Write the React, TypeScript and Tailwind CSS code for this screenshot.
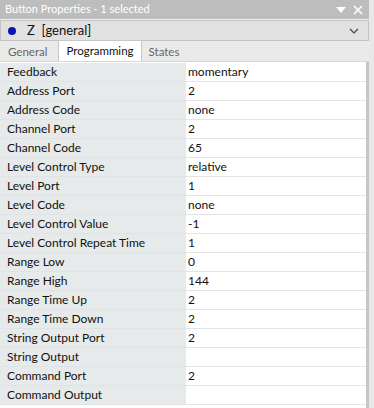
const rows: [string, string][] = [
  ['Feedback', 'momentary'],
  ['Address Port', '2'],
  ['Address Code', 'none'],
  ['Channel Port', '2'],
  ['Channel Code', '65'],
  ['Level Control Type', 'relative'],
  ['Level Port', '1'],
  ['Level Code', 'none'],
  ['Level Control Value', '-1'],
  ['Level Control Repeat Time', '1'],
  ['Range Low', '0'],
  ['Range High', '144'],
  ['Range Time Up', '2'],
  ['Range Time Down', '2'],
  ['String Output Port', '2'],
  ['String Output', ''],
  ['Command Port', '2'],
  ['Command Output', ''],
];

export default function App() {
  return (
    <div
      className="w-[374px] h-[408px] overflow-hidden bg-[#e8e8e8] text-[12px] text-[#111]"
      style={{ fontFamily: 'Lato, "Noto Sans", sans-serif' }}
    >
      <div className="w-[369px] h-full flex flex-col bg-[#f0f0f0]">
        {/* title bar */}
        <div className="h-[19px] bg-[#bdbdbd] flex items-center justify-between pl-[5px] pr-[6px] text-white text-[11px]">
          <span>Button Properties - 1 selected</span>
          <div className="flex items-center gap-[7px]">
            <svg width="10" height="6" viewBox="0 0 10 6">
              <path d="M0 0H10L5 6Z" fill="#fff" />
            </svg>
            <svg width="10" height="10" viewBox="0 0 10 10">
              <path d="M1 1L9 9M9 1L1 9" stroke="#fff" strokeWidth="1.6" />
            </svg>
          </div>
        </div>

        {/* object selector */}
        <div className="h-[21px] mt-px bg-[#e1e1e1] border border-[#c4c4c4] flex items-center pl-[7px] pr-[9px]">
          <span className="w-[8px] h-[8px] rounded-full bg-[#0a14b4]" />
          <span className="ml-[11px] text-[13px]">Z&nbsp;&nbsp;[general]</span>
          <svg className="ml-auto" width="10" height="6" viewBox="0 0 10 6">
            <path d="M1 1L5 5L9 1" fill="none" stroke="#444" strokeWidth="1.2" />
          </svg>
        </div>

        {/* tabs */}
        <div className="h-[21px] flex items-end bg-[#eaeaea] text-[11.5px] text-[#666] border-b border-[#d6d6d6]">
          <div className="pl-[8px] pr-[11px] h-[19px] flex items-center">General</div>
          <div className="px-[7px] h-[21px] flex items-center bg-white border border-b-0 border-[#c8c8c8] text-[#111]">
            Programming
          </div>
          <div className="px-[7px] h-[19px] flex items-center">States</div>
        </div>

        {/* property grid */}
        <div className="flex-1 bg-white border-r-[3px] border-[#c6c6c6] pt-px">
          {rows.map(([label, value]) => (
            <div key={label} className="flex h-[19px]">
              <div className="w-[186px] bg-[#e6eaea] border-b border-[#dfe3e3] pl-[7px] flex items-center whitespace-nowrap">
                {label}
              </div>
              <div className="flex-1 border-b border-[#e4e4e4] pl-[2px] flex items-center">
                {value}
              </div>
            </div>
          ))}
        </div>
      </div>
    </div>
  );
}
